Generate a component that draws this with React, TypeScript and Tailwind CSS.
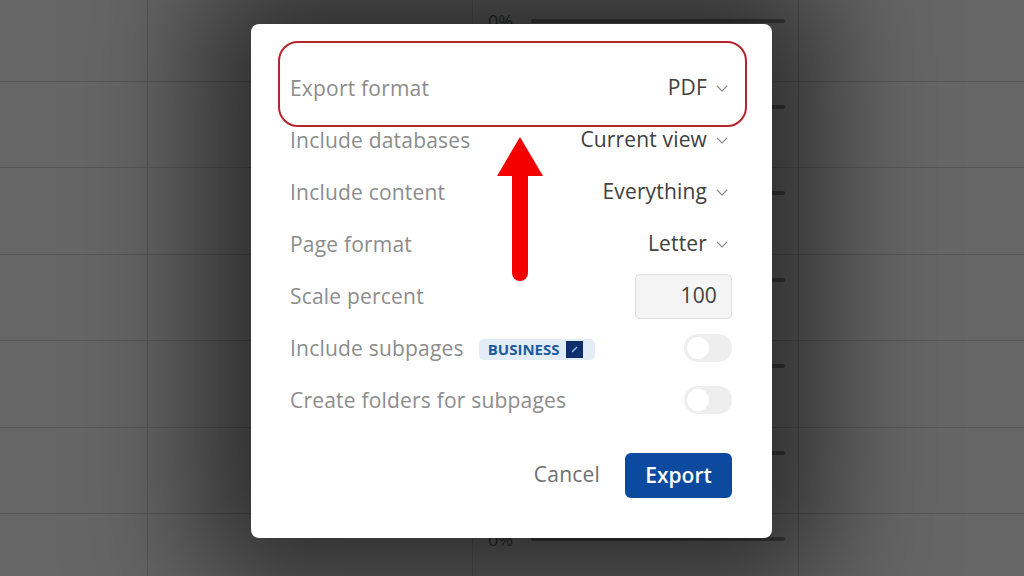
const FONT = "font-['Open_Sans','Noto_Sans',sans-serif]";

const Chevron = () => (
  <svg width="12" height="7" viewBox="0 0 12 7" fill="none" className="ml-[9px] mr-1">
    <path d="M1 1l5 5 5-5" stroke="#8a8a8a" strokeWidth="1.2" />
  </svg>
);

const Toggle = () => (
  <div className="flex h-[28px] w-[48px] items-center rounded-full bg-[#eeeeee] pl-[3px]">
    <div className="h-[22px] w-[22px] rounded-full bg-white" />
  </div>
);

const Row = ({ label, children }: { label: React.ReactNode; children: React.ReactNode }) => (
  <div className="flex h-[52px] items-center justify-between">
    <div className="mt-px flex items-center text-[21px] tracking-[0.2px] text-[#8c8c8c]">{label}</div>
    <div className="flex items-center text-[21px] tracking-[0.15px] text-[#404040]">{children}</div>
  </div>
);

const rows = [0, 1, 2, 3, 4, 5, 6];

export default function App() {
  return (
    <div className={`relative h-[576px] w-[1024px] overflow-hidden bg-[#666666] ${FONT}`}>
      {/* Table behind the dimmed overlay */}
      <div className="-mt-[4.4px]">
        {rows.map((r) => (
          <div key={r} className="grid h-[86.4px] grid-cols-[148px_325px_326px_225px] border-b border-[#565656]">
            <div className="border-r border-[#565656]" />
            <div className="border-r border-[#565656]" />
            <div className="flex items-start border-r border-[#565656] pl-[15px] pt-[13px]">
              {/* only the first and last cells show from behind the dialog */}
              <span className="w-[30px] text-[18px] leading-[24px] text-[#2e2e2e]">{r === 0 || r === 6 ? "0%" : ""}</span>
              <div className="ml-[13px] mt-[10px] h-[4px] w-[254px] rounded-full bg-[#404040]" />
            </div>
            <div />
          </div>
        ))}
      </div>

      {/* Export dialog */}
      <div className="absolute left-[251px] top-[24px] w-[521px] rounded-[8px] bg-white pb-[40px] pl-[39px] pr-[40px] pt-[38px] shadow-[0_0_120px_50px_rgba(0,0,0,0.58)]">
        <Row label="Export format">
          PDF
          <Chevron />
        </Row>
        <Row label="Include databases">
          Current view
          <Chevron />
        </Row>
        <Row label="Include content">
          Everything
          <Chevron />
        </Row>
        <Row label="Page format">
          Letter
          <Chevron />
        </Row>
        <Row label="Scale percent">
          <div className="flex h-[45px] w-[97px] items-center justify-end rounded-[5px] border border-[#dcdcdc] bg-[#f5f5f5] pr-[14px]">
            100
          </div>
        </Row>
        <Row
          label={
            <>
              Include subpages
              <span className="ml-[15px] flex h-[21px] translate-y-[1px] items-center rounded-[5px] bg-[#e3edf8] pl-[9px] pr-[12px] text-[15px] font-bold tracking-normal text-[#1d5a9c]">
                BUSINESS
                <span className="ml-[6px] flex h-[17px] w-[17px] items-center justify-center bg-[#0e2f6c]">
                  <svg width="11" height="11" viewBox="0 0 11 11" fill="none">
                    <path d="M3 8l5-5" stroke="#9cc4ee" strokeWidth="1.4" />
                  </svg>
                </span>
              </span>
            </>
          }
        >
          <Toggle />
        </Row>
        <Row label="Create folders for subpages">
          <Toggle />
        </Row>

        <div className="mt-[27px] flex items-center justify-end">
          <button className="-mt-[2px] mr-[25px] text-[21px] tracking-[0.2px] text-[#6f6f6f]">Cancel</button>
          <button className="flex h-[45px] w-[107px] items-center justify-center rounded-[6px] bg-[#0b4a9e] text-[21px] font-semibold text-white">
            Export
          </button>
        </div>

        {/* Annotation: red frame and arrow */}
        <div className="absolute left-[27px] top-[17px] h-[86px] w-[469px] rounded-[20px] border-2 border-[#b5262c]" />
        <svg className="absolute left-[245px] top-[112px]" width="48" height="148" viewBox="0 0 48 148" fill="none">
          <path d="M24 1L47 40H32V137a8 8 0 0 1-16 0V40H1Z" fill="#f40000" />
        </svg>
      </div>
    </div>
  );
}
